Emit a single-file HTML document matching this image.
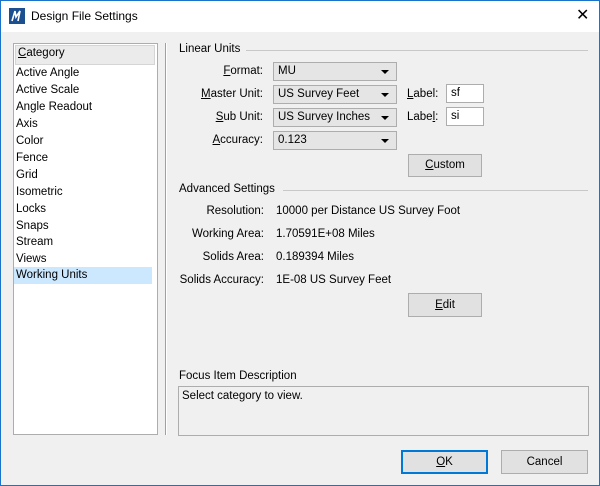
<!DOCTYPE html>
<html><head><style>
body{margin:0;width:600px;height:486px;overflow:hidden;font-family:"Liberation Sans",sans-serif;font-size:11.5px;color:#000}
.win{position:absolute;left:0;top:0;width:598px;height:484px;border:1px solid #1a73c9;background:#f0f0f0}
.title{position:absolute;left:0;top:0;width:598px;height:31px;background:#fff}
.a{position:absolute;white-space:nowrap}
.combo{position:absolute;left:272px;width:118px;height:17px;background:#e5e5e5;border:1px solid #adadad;line-height:17px;padding-left:4px;box-sizing:content-box}
.combo:after{content:"";position:absolute;right:7px;top:7px;border-left:4px solid transparent;border-right:4px solid transparent;border-top:4px solid #000}
.tb{position:absolute;left:445px;width:32px;height:17px;background:#fff;border:1px solid #adadad;line-height:17px;padding-left:4px}
.btn{position:absolute;background:#e1e1e1;border:1px solid #adadad;text-align:center;box-sizing:border-box}
.r{text-align:right}
.li{position:absolute;left:15px}
u{text-decoration:underline}
</style></head><body>
<div class="win">
<div class="title"></div>
<svg class="a" style="left:8px;top:7px" width="16" height="16"><rect width="16" height="16" fill="#1b4f8f"/><path d="M3 13 L6 3 M6 3 L7 9 L11 3 L9 13" stroke="#fff" stroke-width="1.6" fill="none"/></svg>
<div class="a" style="left:30px;top:8px;font-size:12px">Design File Settings</div>
<div class="a" style="left:575px;top:4px;font-size:16px">✕</div>

<div class="a" style="left:12px;top:42px;width:143px;height:390px;background:#fff;border:1px solid #adadad"></div>
<div class="a" style="left:14px;top:44px;width:138px;height:18px;background:#ebebeb;border:1px solid #d5d5d5"></div>
<div class="a" style="left:17px;top:46px"><u>C</u>ategory</div>
<div class="a" style="left:13px;top:266px;width:138px;height:17px;background:#cce8ff"></div>
<div class="li a" style="top:66px">Active Angle</div>
<div class="li a" style="top:83px">Active Scale</div>
<div class="li a" style="top:100px">Angle Readout</div>
<div class="li a" style="top:117px">Axis</div>
<div class="li a" style="top:134px">Color</div>
<div class="li a" style="top:151px">Fence</div>
<div class="li a" style="top:168px">Grid</div>
<div class="li a" style="top:185px">Isometric</div>
<div class="li a" style="top:202px">Locks</div>
<div class="li a" style="top:219px">Snaps</div>
<div class="li a" style="top:235px">Stream</div>
<div class="li a" style="top:252px">Views</div>
<div class="li a" style="top:268px">Working Units</div>

<div class="a" style="left:164px;top:42px;width:1px;height:392px;background:#a0a0a0"></div>
<div class="a" style="left:165px;top:42px;width:1px;height:392px;background:#fff"></div>

<div class="a" style="left:178px;top:42px">Linear Units</div>
<div class="a" style="left:245px;top:49px;width:342px;height:1px;background:#c8c8c8"></div>
<div class="a r" style="left:160px;width:102px;top:64px"><u>F</u>ormat:</div>
<div class="a r" style="left:160px;width:102px;top:87px"><u>M</u>aster Unit:</div>
<div class="a r" style="left:160px;width:102px;top:110px"><u>S</u>ub Unit:</div>
<div class="a r" style="left:160px;width:102px;top:133px"><u>A</u>ccuracy:</div>
<div class="combo" style="top:61px">MU</div>
<div class="combo" style="top:84px">US Survey Feet</div>
<div class="combo" style="top:107px">US Survey Inches</div>
<div class="combo" style="top:130px">0.123</div>
<div class="a" style="left:406px;top:87px"><u>L</u>abel:</div>
<div class="a" style="left:406px;top:110px">Labe<u>l</u>:</div>
<div class="tb" style="top:83px">sf</div>
<div class="tb" style="top:106px">si</div>
<div class="btn" style="left:407px;top:153px;width:74px;height:23px;line-height:21px"><u>C</u>ustom</div>

<div class="a" style="left:178px;top:182px">Advanced Settings</div>
<div class="a" style="left:282px;top:189px;width:305px;height:1px;background:#c8c8c8"></div>
<div class="a r" style="left:160px;width:103px;top:204px">Resolution:</div>
<div class="a r" style="left:160px;width:103px;top:227px">Working Area:</div>
<div class="a r" style="left:160px;width:103px;top:250px">Solids Area:</div>
<div class="a r" style="left:160px;width:103px;top:273px">Solids Accuracy:</div>
<div class="a" style="left:275px;top:204px">10000 per Distance US Survey Foot</div>
<div class="a" style="left:275px;top:227px">1.70591E+08 Miles</div>
<div class="a" style="left:275px;top:250px">0.189394 Miles</div>
<div class="a" style="left:275px;top:273px">1E-08 US Survey Feet</div>
<div class="btn" style="left:407px;top:292px;width:74px;height:24px;line-height:22px"><u>E</u>dit</div>

<div class="a" style="left:178px;top:369px">Focus Item Description</div>
<div class="a" style="left:177px;top:385px;width:409px;height:48px;border:1px solid #adadad"></div>
<div class="a" style="left:181px;top:389px">Select category to view.</div>

<div class="btn" style="left:400px;top:449px;width:87px;height:24px;line-height:20px;border:2px solid #0078d7"><u>O</u>K</div>
<div class="btn" style="left:500px;top:449px;width:87px;height:24px;line-height:22px">Cancel</div>
</div>
</body></html>
